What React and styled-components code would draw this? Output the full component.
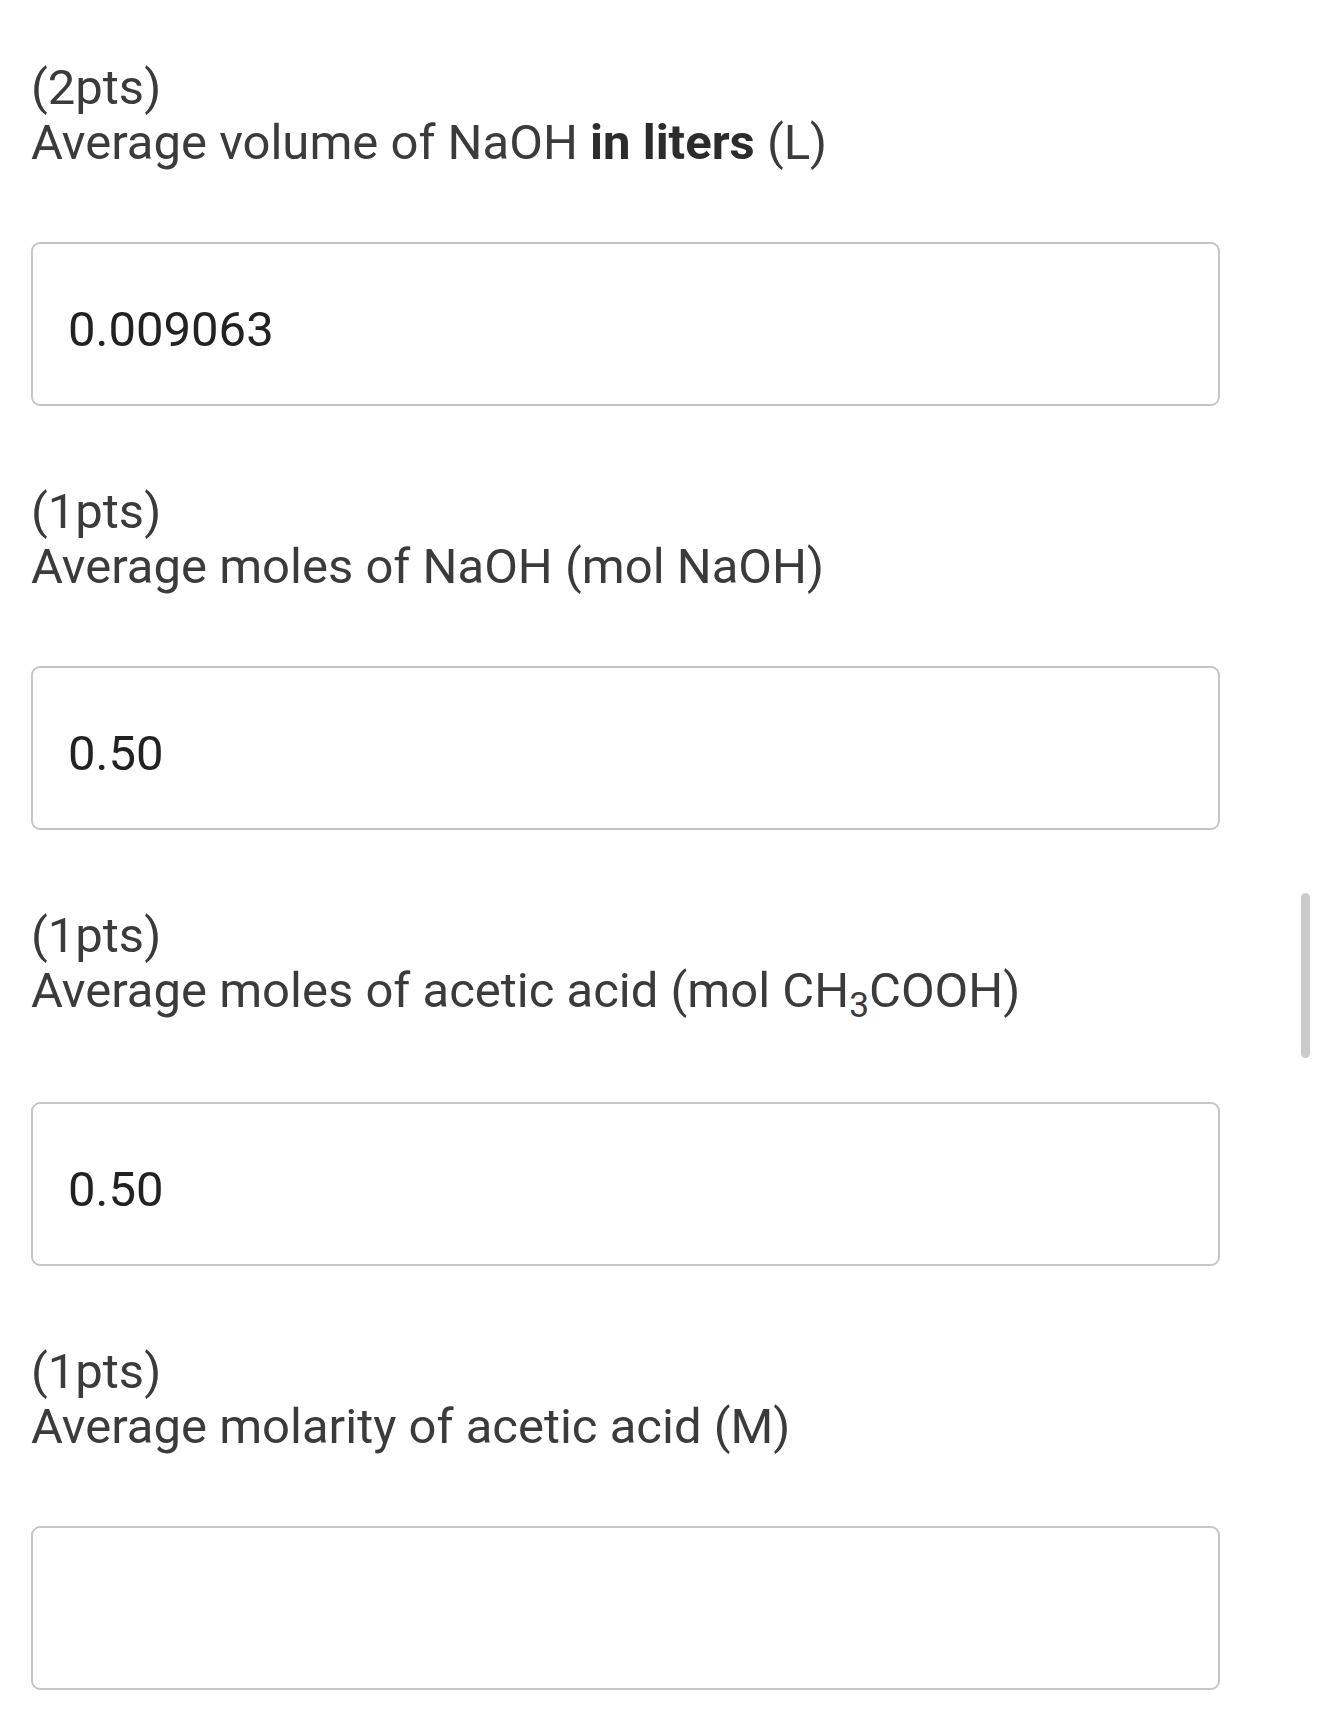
import React from 'react'
import styled, { createGlobalStyle } from 'styled-components'

const GlobalStyle = createGlobalStyle`
  html, body {
    margin: 0;
    padding: 0;
    background: #ffffff;
  }
  body {
    font-family: Roboto, "Noto Sans", "Liberation Sans", sans-serif;
  }
`

const Page = styled.div`
  position: relative;
  min-height: 1733px;
  padding: 60px 100px 0 31px;
  box-sizing: border-box;
  display: flex;
  flex-direction: column;
  gap: 78px;
`

const Question = styled.section`
  display: flex;
  flex-direction: column;
  gap: 72px;
`

const Label = styled.div`
  font-size: 49px;
  line-height: 55px;
  color: #3b3b3b;
  padding-bottom: ${props => (props.$sub ? '12px' : '0')};
  b {
    font-weight: 700;
    color: #2c2c2c;
  }
  sub {
    font-size: 0.72em;
    vertical-align: -0.28em;
    line-height: 0;
  }
`

const Field = styled.div`
  height: 164px;
  box-sizing: border-box;
  border: 2px solid #c6c6c6;
  border-radius: 9px;
  padding: 57px 35px 0;
  font-size: 49px;
  line-height: 57px;
  color: #222222;
`

const Scrollbar = styled.div`
  position: absolute;
  left: 1301px;
  top: 893px;
  width: 9px;
  height: 165px;
  border-radius: 5px;
  background: #cbcbcb;
`

const questions = [
  {
    id: 1,
    pts: 2,
    label: <>Average volume of NaOH <b>in liters</b> (L)</>,
    value: '0.009063'
  },
  {
    id: 2,
    pts: 1,
    label: <>Average moles of NaOH (mol NaOH)</>,
    value: '0.50'
  },
  {
    id: 3,
    pts: 1,
    sub: true,
    label: <>Average moles of acetic acid (mol CH<sub>3</sub>COOH)</>,
    value: '0.50'
  },
  {
    id: 4,
    pts: 1,
    label: <>Average molarity of acetic acid (M)</>,
    value: ''
  }
]

const App = () => {
  return (
    <>
      <GlobalStyle />
      <Page>
        {questions.map(q => (
          <Question key={q.id}>
            <Label $sub={q.sub}>
              ({q.pts}pts)
              <br />
              {q.label}
            </Label>
            <Field>{q.value}</Field>
          </Question>
        ))}
        <Scrollbar />
      </Page>
    </>
  )
}

export default App
